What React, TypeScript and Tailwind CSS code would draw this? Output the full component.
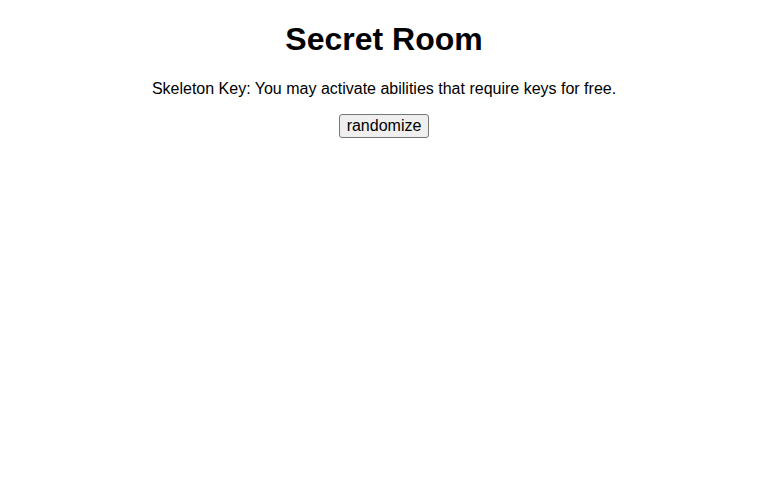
export default function App() {
  return (
    <div className="text-center text-black bg-white" style={{ fontFamily: '"Liberation Sans", Arial, sans-serif' }}>
      <h1 className="text-[32px] font-bold leading-[37px] pt-[21.44px] mb-[21.44px]">Secret Room</h1>
      <p className="text-[16px] leading-[18px] mb-4">Skeleton Key: You may activate abilities that require keys for free.</p>
      <button className="text-[16px] leading-[18px] px-[7px] py-[2px] bg-[#efefef] border border-[#767676] rounded-[3px]">
        randomize
      </button>
    </div>
  );
}
